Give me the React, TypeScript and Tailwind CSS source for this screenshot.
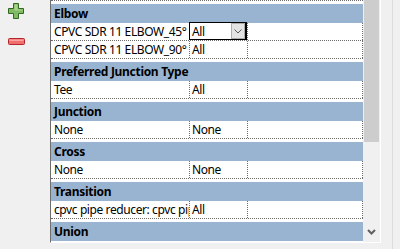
const FONT = { fontFamily: '"Noto Sans", "Open Sans", Arial, sans-serif' };

type Row = { name: string; value: string; combo?: boolean };
type Section = { title: string; rows: Row[] };

const SECTIONS: Section[] = [
  {
    title: 'Elbow',
    rows: [
      { name: 'CPVC SDR 11 ELBOW_45°', value: 'All', combo: true },
      { name: 'CPVC SDR 11 ELBOW_90°', value: 'All' },
    ],
  },
  { title: 'Preferred Junction Type', rows: [{ name: 'Tee', value: 'All' }] },
  { title: 'Junction', rows: [{ name: 'None', value: 'None' }] },
  { title: 'Cross', rows: [{ name: 'None', value: 'None' }] },
  { title: 'Transition', rows: [{ name: 'cpvc pipe reducer: cpvc pipe reducer', value: 'All' }] },
  { title: 'Union', rows: [] },
];

const DOT = 'border-dotted border-[#6b6b6b]';

function PlusIcon() {
  return (
    <svg width="16" height="16" viewBox="0 0 16 16">
      <path
        d="M5.5 0.5h5v5h5v5h-5v5h-5v-5h-5v-5h5z"
        fill="#82b965"
        stroke="#2f6b1e"
        strokeWidth="1"
      />
      <path d="M6.5 1.5h3v5h5v1h-8z" fill="#a9d48f" />
    </svg>
  );
}

function MinusIcon() {
  return (
    <svg width="17" height="7" viewBox="0 0 17 7">
      <rect x="0.5" y="0.5" width="16" height="6" rx="1" fill="#f26d6d" stroke="#b0282b" />
      <rect x="1.5" y="1.5" width="14" height="1.5" fill="#f9a3a3" />
    </svg>
  );
}

function DataRow({ row }: { row: Row }) {
  return (
    <div className={`flex h-[18px] border-b ${DOT} bg-white text-[12px] leading-[17px] tracking-[-0.4px] text-black`}>
      <div className={`w-[139px] shrink-0 overflow-hidden whitespace-nowrap border-r ${DOT} pl-[3px]`}>
        {row.name}
      </div>
      <div className={`relative w-[58px] shrink-0 border-r ${DOT} pl-[2px]`}>
        {row.combo ? (
          <div className="absolute -left-px -top-px bottom-0 right-0 border border-r-2 border-black bg-white pl-[2px]">
            {row.value}
            <div className="absolute right-0 top-0 bottom-0 flex w-[14px] items-center justify-center border border-[#adadad] bg-[#e3e3e3]">
              <svg width="8" height="5" viewBox="0 0 8 5">
                <path d="M0.5 0.5l3.5 3.5l3.5-3.5" fill="none" stroke="#5a5a5a" strokeWidth="1" />
              </svg>
            </div>
          </div>
        ) : (
          row.value
        )}
      </div>
      <div className={`flex-1 border-r ${DOT}`} />
    </div>
  );
}

export default function App() {
  return (
    <div className="flex h-[249px] w-[400px] overflow-hidden bg-[#f0f0f0]" style={FONT}>
      {/* add / remove */}
      <div className="flex w-[50px] shrink-0 flex-col pl-[8px] pt-[3px]">
        <PlusIcon />
        <div className="mt-[19px]">
          <MinusIcon />
        </div>
      </div>

      {/* property grid */}
      <div className="flex h-[243px] w-[331px] shrink-0 border-b border-l border-r border-b-white border-l-[#6e6e6e] border-r-white">
        <div className="flex w-[312px] flex-col overflow-hidden bg-white">
          <div className={`h-px shrink-0 border-b ${DOT}`} />
          {SECTIONS.map(s => (
            <div key={s.title} className="mt-[3px] flex shrink-0 flex-col">
              <div className="h-[19px] bg-[#99b4d1] pl-[3px] text-[12px] font-bold leading-[19px] tracking-[-0.3px] text-black">
                {s.title}
              </div>
              {s.rows.map((r, i) => (
                <DataRow key={i} row={r} />
              ))}
            </div>
          ))}
        </div>
        <div className="relative w-[17px] shrink-0 bg-[#f0f0f0]">
          <div className="ml-px h-[142px] w-[15px] bg-[#cdcdcd]" />
          <svg className="absolute left-[4px] top-[229px]" width="9" height="6" viewBox="0 0 9 6">
            <path d="M1 1l3.5 3.5l3.5-3.5" fill="none" stroke="#606060" strokeWidth="2" />
          </svg>
        </div>
      </div>

      <div className="w-[11px] shrink-0" />
      <div className="h-full w-px shrink-0 bg-[#dcdcdc]" />
    </div>
  );
}
